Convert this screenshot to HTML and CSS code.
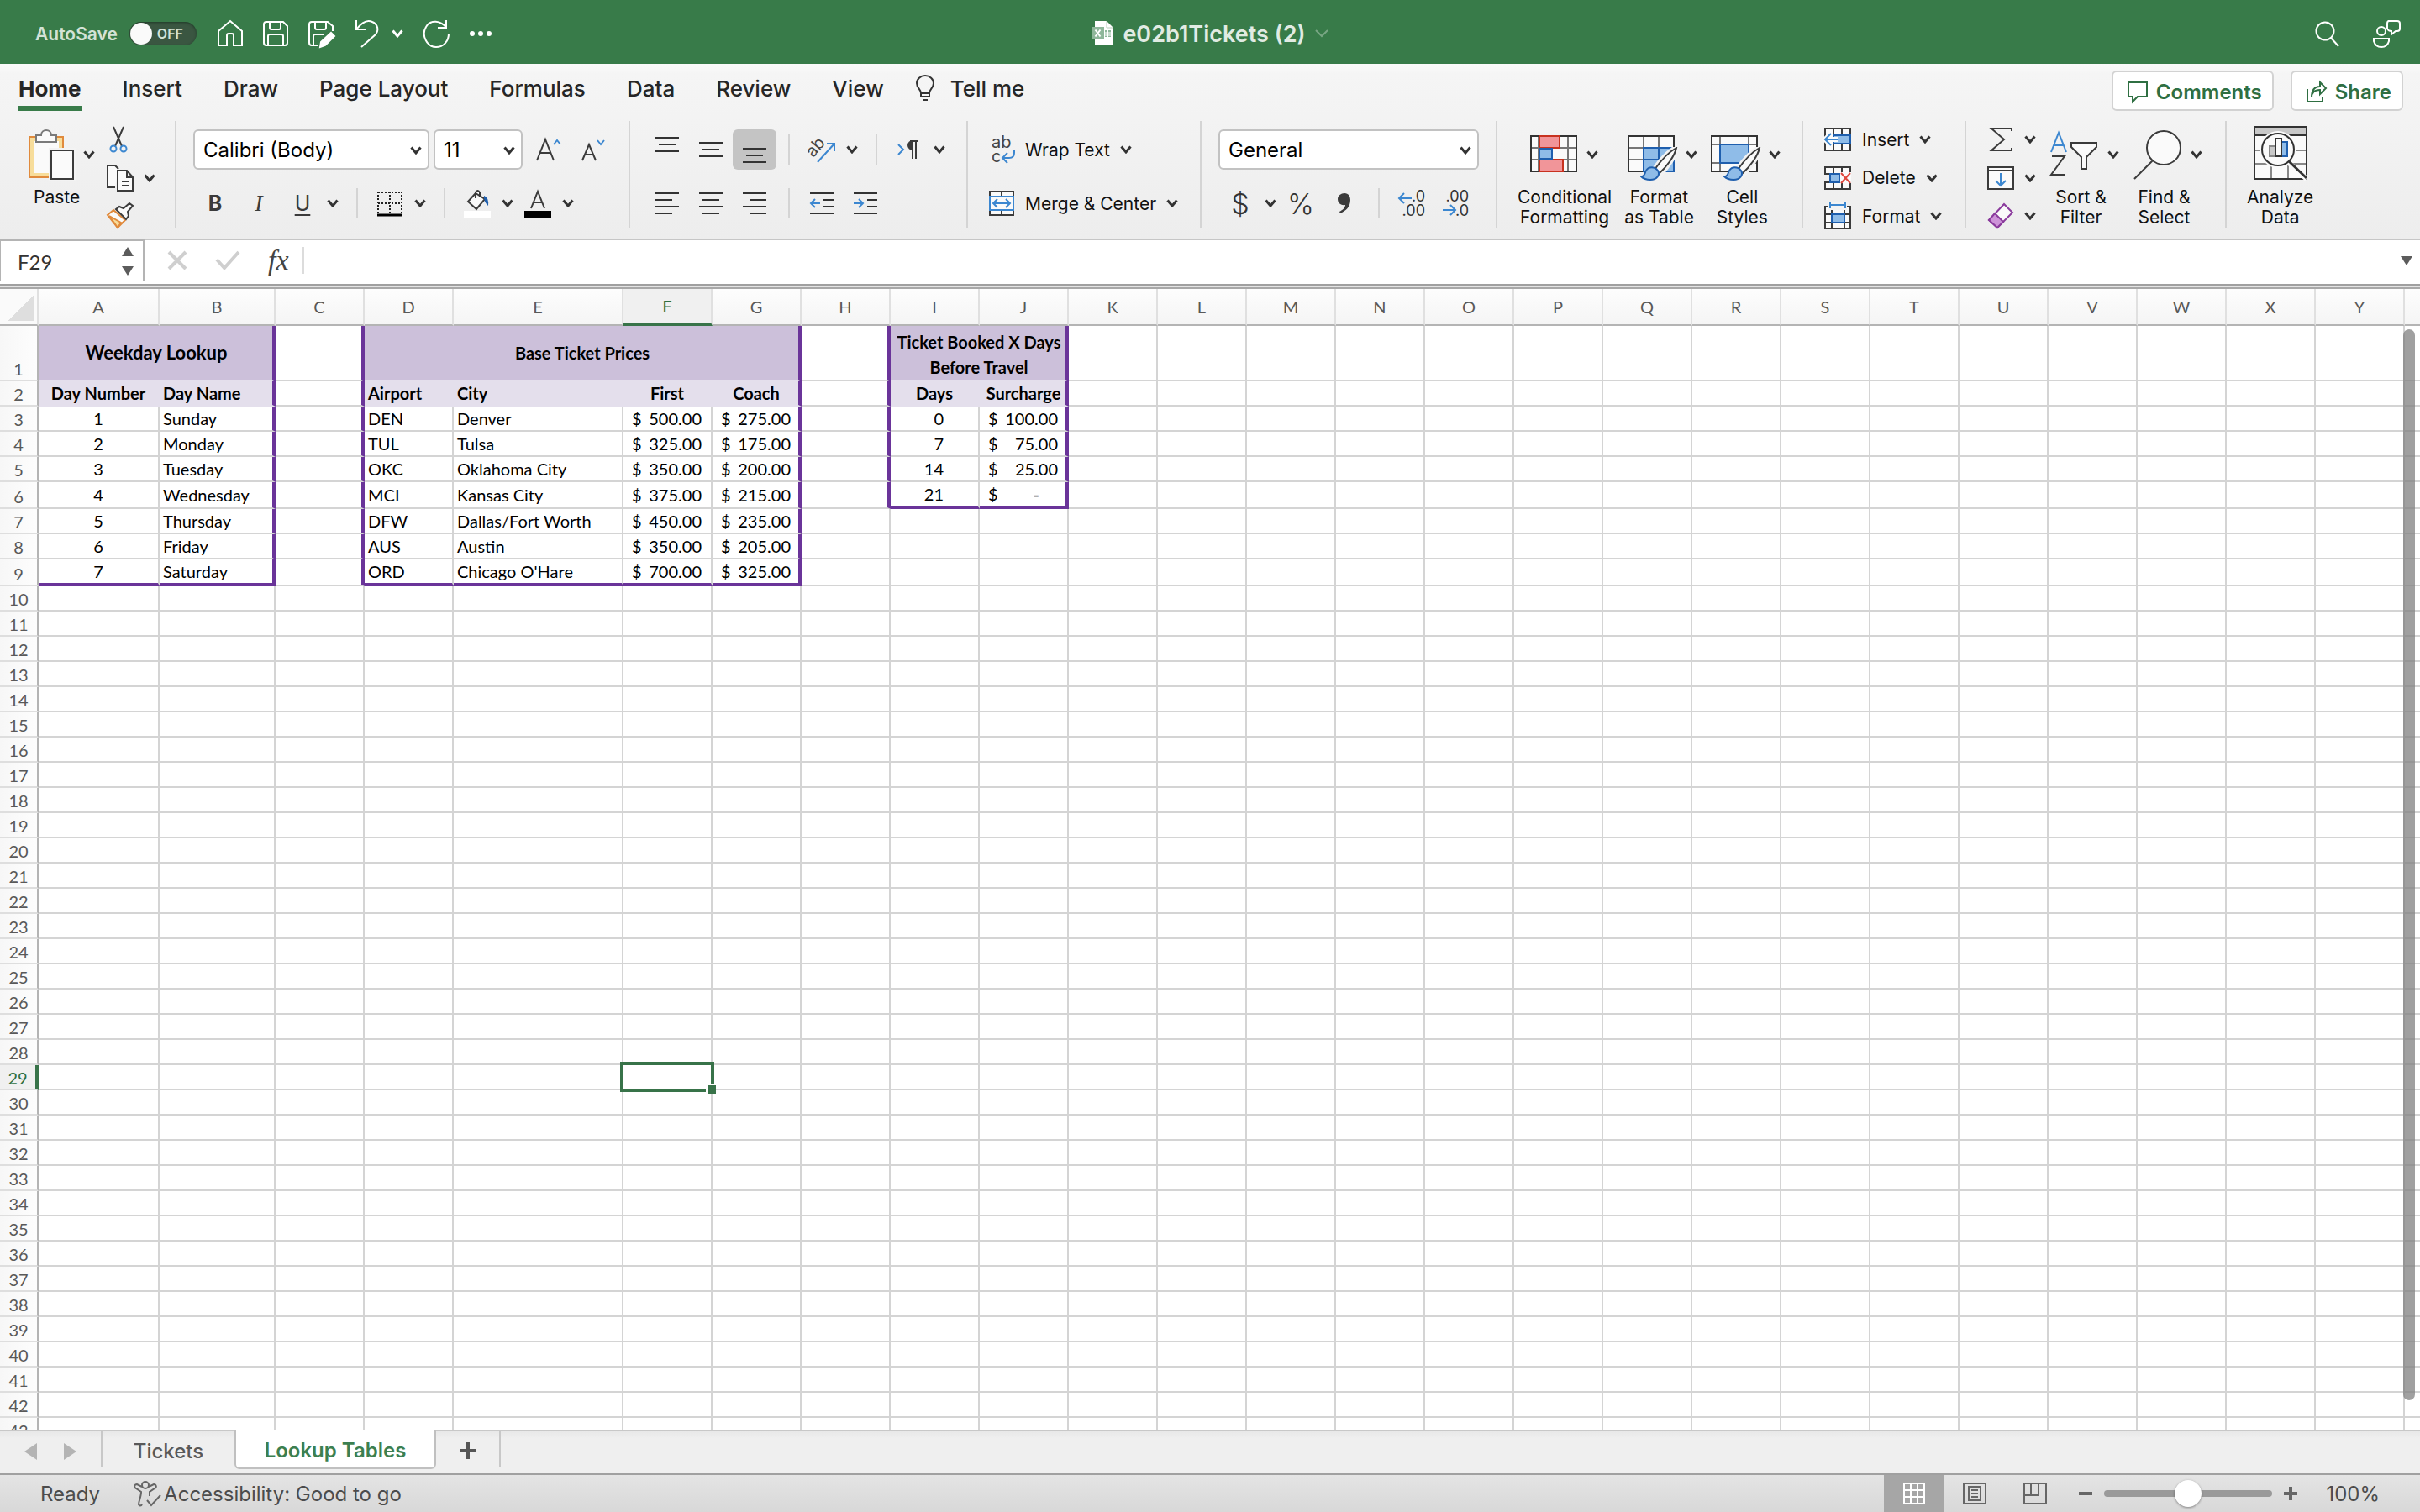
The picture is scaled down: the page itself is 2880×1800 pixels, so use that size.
FILE: index.html
```
<!DOCTYPE html>
<html lang="en">
<head>
  <meta charset="UTF-8">
  <title>e02b1Tickets (2)</title>
  <meta name="viewport" content="width=device-width, initial-scale=1.0">
  <link rel="stylesheet" href="styles.css">
</head>
<body>
  <svg class="defs" aria-hidden="true">
    <symbol id="chev" viewBox="0 0 14 10"><path d="M1.500 1.500 7 8 12.500 1.500" fill="none" stroke="currentColor" stroke-width="3"/></symbol>
    <symbol id="brush" viewBox="0 0 46 40">
      <path d="M43 1C34 6 24 17 17 27l6 6C31 24 41 11 43 1z" fill="#fafafa" stroke="#f3f3f3" stroke-width="7"/>
      <path d="M43 1C34 6 24 17 17 27l5 5C31 24 41 11 43 1z" fill="#fafafa" stroke="#3b3b3b" stroke-width="2"/>
      <path d="M1 35c5 0 4-4 6-7 3-5 10-5 14 0 3 5-1 11-9 11-5 0-9-2-11-4z" fill="#8fbce8" stroke="#1f5fae" stroke-width="2"/>
    </symbol>
  </svg>

  <header class="titlebar">
    <div class="title-left">
      <label class="autosave">AutoSave
        <span class="toggle"><input type="checkbox"><span>OFF</span></span>
      </label>
      <button aria-label="Home"><svg width="32" height="34" viewBox="0 0 32 34"><path d="M2 31V14L16 2l14 12v17H20V19q0-2-2-2h-4q-2 0-2 2v12z"/></svg></button>
      <button aria-label="Save"><svg width="32" height="34" viewBox="0 0 32 34"><path d="M5 3h20l5 5v20q0 3-3 3H5q-3 0-3-3V6q0-3 3-3zM9 3v7q0 2 2 2h9q2 0 2-2V3M7 31V20q0-2 2-2h14q2 0 2 2v11"/></svg></button>
      <button aria-label="Save as"><svg width="34" height="34" viewBox="0 0 34 34"><path d="M13 31H5q-3 0-3-3V6q0-3 3-3h19l6 5v6M9 3v7q0 2 2 2h9q2 0 2-2V3M7 31V20q0-2 2-2h11"/><path d="M28 16l4 4-11 11-6 2 1-6z" fill="#fff"/></svg></button>
      <button class="with-chev" aria-label="Undo"><svg width="30" height="36" viewBox="0 0 30 36"><path d="M2 2v11h12M2 13C9 4 15 1 21 4c7 3 8 10 4 15L8 34"/></svg><svg class="chev"><use href="#chev"/></svg></button>
      <button aria-label="Redo"><svg width="34" height="36" viewBox="0 0 34 36"><path d="M29 2v9H19M29 11C23 2 10 1 5 10-1 20 6 34 17 34c9 0 15-7 15-16"/></svg></button>
      <button aria-label="More"><svg width="28" height="34" viewBox="0 0 28 34"><g fill="#fff" stroke="none"><circle cx="4" cy="17" r="3"/><circle cx="14" cy="17" r="3"/><circle cx="24" cy="17" r="3"/></g></svg></button>
    </div>
    <div class="doc-title">
      <svg width="28" height="30" viewBox="0 0 28 30"><path d="M5 0h14l8 8v21H5z" fill="#fff" stroke="none"/><path d="M19 0v8h8" stroke="#b9cdbd" stroke-width="1"/><path d="M17 11h7v8h-7z" fill="#8fb79a" stroke="none"/><path d="M20.500 11v8M17 14h7M17 17h7" stroke="#fff" stroke-width="1"/><path d="M1 7h15v15H1z" fill="#8fb79a" stroke="none"/><path d="M5.500 10.500l6 8m0-8l-6 8" stroke="#fff" stroke-width="2"/></svg>
      <h1>e02b1Tickets (2)</h1>
      <svg class="chev chev-title" viewBox="0 0 18 12"><path d="M2 2l7 7 7-7"/></svg>
    </div>
    <div class="title-right">
      <button aria-label="Search"><svg width="32" height="34" viewBox="0 0 32 34"><circle cx="13" cy="14" r="10.500"/><path d="M20 22l9 10"/></svg></button>
      <button aria-label="Presence"><svg width="36" height="36" viewBox="0 0 36 36"><circle cx="12" cy="15" r="5"/><path d="M3 24h18v3q-2 7-9 7t-9-7zM20 3h11q3 0 3 3v6q0 3-3 3h-2l-5 4v-4q-4 0-5-3V6q0-3 2-3z"/></svg></button>
    </div>
  </header>

  <nav class="tabs">
    <a href="#" class="active">Home</a>
    <a href="#">Insert</a>
    <a href="#">Draw</a>
    <a href="#">Page Layout</a>
    <a href="#">Formulas</a>
    <a href="#">Data</a>
    <a href="#">Review</a>
    <a href="#">View</a>
    <a href="#" class="tell"><svg width="24" height="32" viewBox="0 0 24 32"><path d="M7 22c0-5-5-6-5-12a10 9 0 0 1 20 0c0 6-5 7-5 12zM7 22v4h10v-4M9 30h6" fill="none" stroke="#333" stroke-width="2"/></svg>Tell me</a>
    <div class="tab-actions">
      <button><svg width="26" height="26" viewBox="0 0 26 26"><path d="M2 2h22v17H13l-6 6v-6H2z" fill="none" stroke="#2f6f42" stroke-width="2"/></svg>Comments</button>
      <button><svg width="26" height="26" viewBox="0 0 26 26"><path d="M2 10v15h18v-5M7 20c0-7 4-9 10-9v5l7-7-7-7v5C10 7 7 12 7 20z" fill="none" stroke="#2f6f42" stroke-width="2"/></svg>Share</button>
    </div>
  </nav>

  <section class="ribbon">
    <div class="group g-clip">
      <button class="big">
        <span class="big-icon"><svg width="58" height="62" viewBox="0 0 58 62"><path d="M3 10h40v48H3z" fill="#f7dd9b" stroke="#e08a3c" stroke-width="2"/><path d="M8 15h30v38H8z" fill="#fafafa"/><path d="M11 8h6c0-8 12-8 12 0h6v8H11z" fill="#fafafa" stroke="#7a7a7a" stroke-width="2"/><path d="M26 23h32v39H26z" fill="#f3f3f3"/><path d="M29 26h26v34H29z" fill="#fafafa" stroke="#3b3b3b" stroke-width="2"/></svg><svg class="chev"><use href="#chev"/></svg></span>
        Paste
      </button>
      <div class="stack">
        <button aria-label="Cut"><svg width="32" height="34" viewBox="0 0 32 34" fill="none" stroke-width="2"><path d="M9 2l10 23M21 2L11 25" stroke="#3b3b3b"/><circle cx="9" cy="28" r="3.500" stroke="#3c87d0"/><circle cx="21" cy="28" r="3.500" stroke="#3c87d0"/></svg></button>
        <button aria-label="Copy"><svg width="34" height="34" viewBox="0 0 34 34" fill="#fafafa" stroke="#3b3b3b" stroke-width="2"><path d="M11 28H2V2h9l4 4"/><path d="M14 8h11l7 8v16H14zM25 8v8h7M19 21h8M19 26h8"/></svg><svg class="chev"><use href="#chev"/></svg></button>
        <button aria-label="Format painter"><svg width="34" height="32" viewBox="0 0 34 32" fill="#fafafa" stroke-width="2"><path d="M9 9l14 12-9 9L2 15z" stroke="#e08a3c"/><path d="M4 16l14 8-4 6z" fill="#f7dd9b" stroke="#e08a3c"/><path d="M12 8l4-3 5 2 7-6 4 3-6 7 1 5-3 4z" stroke="#3b3b3b"/></svg></button>
      </div>
    </div>

    <div class="group rows">
      <div class="row">
        <label class="pick pick-font"><select aria-label="Font"><option>Calibri (Body)</option></select><svg class="chev"><use href="#chev"/></svg></label>
        <label class="pick pick-size"><select aria-label="Font size"><option>11</option></select><svg class="chev"><use href="#chev"/></svg></label>
        <button class="ico" aria-label="Increase font size"><svg width="32" height="30" viewBox="0 0 32 30" fill="none" stroke="#3b3b3b" stroke-width="2"><path d="M2 28L12 3l10 25M6 19h12"/><path d="M22 9l4-5 4 5" stroke="#3c87d0"/></svg></button>
        <button class="ico" aria-label="Decrease font size"><svg width="32" height="30" viewBox="0 0 32 30" fill="none" stroke="#3b3b3b" stroke-width="2"><path d="M4 28l8-19 8 19M7 21h10"/><path d="M22 4l4 5 4-5" stroke="#3c87d0"/></svg></button>
      </div>
      <div class="row">
        <button class="ico txt bold">B</button>
        <button class="ico txt italic">I</button>
        <button class="ico txt under">U</button>
        <button class="drop" aria-label="Underline style"><svg class="chev"><use href="#chev"/></svg></button>
        <i class="sep"></i>
        <button class="ico" aria-label="Borders"><svg width="32" height="32" viewBox="0 0 32 32" fill="none" stroke="#222" stroke-width="2"><path d="M2 3h28M2 16h28M2 2v26M16 2v26M30 2v26" stroke-dasharray="2 2"/><path d="M1 30h30" stroke="#000" stroke-width="3"/></svg></button>
        <button class="drop" aria-label="Border style"><svg class="chev"><use href="#chev"/></svg></button>
        <i class="sep"></i>
        <button class="ico" aria-label="Fill color"><svg width="32" height="34" viewBox="0 0 32 34" fill="#fafafa" stroke="#3b3b3b" stroke-width="2"><path d="M14 5L5 15l10 9 10-12zM14 11V4q2-4 5 0v5"/><path d="M24 8q6 2 5 12-4-3-5-9z" fill="#1f5fae" stroke="none"/><path d="M0 26h32v8H0z" fill="#fff" stroke="none"/></svg></button>
        <button class="drop" aria-label="Fill colors"><svg class="chev"><use href="#chev"/></svg></button>
        <button class="ico" aria-label="Font color"><svg width="32" height="34" viewBox="0 0 32 34" fill="none" stroke="#3b3b3b" stroke-width="2"><path d="M8 23l8-20 8 20M11 16h10"/><path d="M0 26h32v8H0z" fill="#000" stroke="none"/></svg></button>
        <button class="drop" aria-label="Font colors"><svg class="chev"><use href="#chev"/></svg></button>
      </div>
    </div>

    <div class="group rows align">
      <div class="row">
        <button class="ico" aria-label="Top align"><svg class="lines" viewBox="0 0 28 32"><path d="M0 2h28M4 10h20M0 18h28"/></svg></button>
        <button class="ico" aria-label="Middle align"><svg class="lines" viewBox="0 0 28 32"><path d="M0 8h28M4 16h20M0 24h28"/></svg></button>
        <button class="ico pressed" aria-label="Bottom align"><svg class="lines" viewBox="0 0 28 32"><path d="M0 15h28M4 23h20M0 31h28"/></svg></button>
        <i class="sep tight"></i>
        <button class="ico" aria-label="Orientation"><svg width="34" height="34" viewBox="0 0 34 34"><text x="2" y="23" transform="rotate(-50 9 20)" class="ic-text">ab</text><path d="M12 32L32 10M23 10h9v9" fill="none" stroke="#3c87d0" stroke-width="2"/></svg></button>
        <button class="drop" aria-label="Orientation options"><svg class="chev"><use href="#chev"/></svg></button>
        <i class="sep"></i>
        <button class="ico" aria-label="Text direction"><svg width="28" height="24" viewBox="0 0 28 24" fill="none" stroke-width="2"><path d="M1 6l6 6-6 6" stroke="#3c87d0"/><path d="M18 3v20M22 3v20M15 2h10" stroke="#3b3b3b"/><path d="M18 2a5 5 0 0 0 0 10z" fill="#3b3b3b" stroke="#3b3b3b"/></svg></button>
        <button class="drop" aria-label="Text direction options"><svg class="chev"><use href="#chev"/></svg></button>
      </div>
      <div class="row">
        <button class="ico" aria-label="Align left"><svg class="lines" viewBox="0 0 28 32"><path d="M0 4h28M0 12h20M0 20h28M0 28h20"/></svg></button>
        <button class="ico" aria-label="Center"><svg class="lines" viewBox="0 0 28 32"><path d="M0 4h28M4 12h20M0 20h28M4 28h20"/></svg></button>
        <button class="ico" aria-label="Align right"><svg class="lines" viewBox="0 0 28 32"><path d="M0 4h28M8 12h20M0 20h28M8 28h20"/></svg></button>
        <i class="sep tight"></i>
        <button class="ico" aria-label="Decrease indent"><svg class="lines" viewBox="0 0 28 32"><path d="M0 4h28M16 12h12M16 20h12M0 28h28"/><path class="blue" d="M12 16H1M6 11l-5 5 5 5"/></svg></button>
        <button class="ico" aria-label="Increase indent"><svg class="lines" viewBox="0 0 28 32"><path d="M0 4h28M16 12h12M16 20h12M0 28h28"/><path class="blue" d="M0 16h11M6 11l5 5-5 5"/></svg></button>
      </div>
    </div>

    <div class="group rows">
      <div class="row">
        <button class="labelled"><svg width="32" height="34" viewBox="0 0 32 34"><text x="4" y="15" class="ic-text">ab</text><text x="4" y="32" class="ic-text">c</text><path d="M31 17v4q0 6-6 6h-7M23 21l-6 6 6 6" fill="none" stroke="#3c87d0" stroke-width="2"/></svg>Wrap Text<svg class="chev"><use href="#chev"/></svg></button>
      </div>
      <div class="row">
        <button class="labelled"><svg width="32" height="32" viewBox="0 0 32 32" fill="#fafafa" stroke="#3b3b3b" stroke-width="2"><path d="M2 2h28v28H2zM16 2v28"/><path d="M2 8h28v16H2zM6 16h20M11 11l-5 5 5 5M21 11l5 5-5 5" stroke="#3c87d0"/></svg>Merge &amp; Center<svg class="chev"><use href="#chev"/></svg></button>
      </div>
    </div>

    <div class="group rows">
      <div class="row">
        <label class="pick pick-number"><select aria-label="Number format"><option>General</option></select><svg class="chev"><use href="#chev"/></svg></label>
      </div>
      <div class="row money-row">
        <button class="ico sign">$</button>
        <button class="drop" aria-label="Currency"><svg class="chev"><use href="#chev"/></svg></button>
        <button class="ico sign">%</button>
        <button class="ico" aria-label="Comma style"><svg width="18" height="26" viewBox="0 0 18 26"><path d="M9 1c5 0 7 4 7 8 0 8-5 13-12 16l-1-2c4-2 7-5 7-8-6 1-9-3-9-7s4-7 8-7z" fill="#3b3b3b"/></svg></button>
        <i class="sep tight"></i>
        <button class="ico" aria-label="Increase decimal"><svg width="34" height="34" viewBox="0 0 34 34"><text x="33" y="15" class="ic-num">.0</text><text x="33" y="32" class="ic-num">.00</text><path d="M17 11H2M8 5l-6 6 6 6" fill="none" stroke="#3c87d0" stroke-width="2"/></svg></button>
        <button class="ico" aria-label="Decrease decimal"><svg width="34" height="34" viewBox="0 0 34 34"><text x="33" y="15" class="ic-num">.00</text><text x="33" y="32" class="ic-num">.0</text><path d="M2 25h15M11 19l6 6-6 6" fill="none" stroke="#3c87d0" stroke-width="2"/></svg></button>
      </div>
    </div>

    <div class="group g-styles">
      <button class="big">
        <span class="big-icon"><svg width="60" height="62" viewBox="0 0 60 62" fill="none" stroke="#777" stroke-width="2"><path d="M3 9h54v42H3z" fill="#fafafa"/><path d="M12 9v42M47 9v42M3 23h54M3 37h54"/><path d="M3 9h54v42H3z" stroke="#333"/><path d="M13 9h24v14H13zM13 37h28v14H13z" fill="#f19599" stroke="#c8321f"/><path d="M13 24h15v12H13z" fill="#8fbce8" stroke="#1f5fae"/></svg><svg class="chev"><use href="#chev"/></svg></span>
        Conditional<br>Formatting
      </button>
      <button class="big">
        <span class="big-icon"><svg width="60" height="62" viewBox="0 0 60 62" fill="none" stroke="#777" stroke-width="2"><path d="M1 9h54v42H1z" fill="#fafafa"/><path d="M19 9v42M37 9v42M1 23h54M1 37h54"/><path d="M1 9h54v42H1z" stroke="#333"/><path d="M19 23h36v28H19z" fill="#8fbce8" stroke="#1f5fae"/><path d="M37 23v28M19 37h36" stroke="#1f5fae"/><use href="#brush" x="15" y="22" width="46" height="40" stroke="none"/></svg><svg class="chev"><use href="#chev"/></svg></span>
        Format<br>as Table
      </button>
      <button class="big">
        <span class="big-icon"><svg width="60" height="62" viewBox="0 0 60 62" fill="none" stroke="#777" stroke-width="2"><path d="M1 9h54v42H1z" fill="#fafafa"/><path d="M11 9v42M45 9v42M1 19h54M1 41h54"/><path d="M1 9h54v42H1z" stroke="#333"/><path d="M11 19h34v22H11z" fill="#8fbce8" stroke="#1f5fae"/><use href="#brush" x="15" y="22" width="46" height="40" stroke="none"/></svg><svg class="chev"><use href="#chev"/></svg></span>
        Cell<br>Styles
      </button>
    </div>

    <div class="group g-cells">
      <button class="labelled"><svg width="34" height="30" viewBox="0 0 34 30" fill="#fafafa" stroke="#3b3b3b" stroke-width="2"><path d="M2 2h30v26H2zM12 2v26M22 2v26"/><path d="M12 10h20v10H12z" fill="#8fbce8" stroke="#1f5fae"/><path d="M17 15H3M9 8l-7 7 7 7" fill="none" stroke="#fafafa" stroke-width="6"/><path d="M17 15H3M9 8l-7 7 7 7" fill="none" stroke="#3c87d0"/></svg>Insert<svg class="chev"><use href="#chev"/></svg></button>
      <button class="labelled"><svg width="34" height="30" viewBox="0 0 34 30" fill="#fafafa" stroke="#3b3b3b" stroke-width="2"><path d="M2 10V2h30v26H2v-8h7V10zM12 2v26M22 2v26"/><path d="M8 10h12v10H8z" fill="#8fbce8" stroke="#1f5fae"/><path d="M20 8h13v13H20z" stroke="none"/><path d="M21 9l11 12M32 9L21 21" stroke="#e0483e"/></svg>Delete<svg class="chev"><use href="#chev"/></svg></button>
      <button class="labelled"><svg width="34" height="34" viewBox="0 0 34 34" fill="#fafafa" stroke="#3b3b3b" stroke-width="2"><path d="M2 6h30v26H2zM10 6v26M25 6v26M2 15h30M2 25h30"/><path d="M5 0h23v10H5z" fill="#f3f3f3" stroke="none"/><path d="M10 15h15v10H10z" fill="#8fbce8" stroke="#1f5fae"/><path d="M8 4h18M8 0v8M26 0v8" stroke="#3c87d0"/></svg>Format<svg class="chev"><use href="#chev"/></svg></button>
    </div>

    <div class="group g-edit">
      <div class="stack">
        <button aria-label="AutoSum"><svg width="34" height="30" viewBox="0 0 34 30" fill="none" stroke="#3b3b3b" stroke-width="2"><path d="M30 5V2H6l15 13L6 28h24v-3"/></svg><svg class="chev"><use href="#chev"/></svg></button>
        <button aria-label="Fill"><svg width="34" height="30" viewBox="0 0 34 30" fill="#fafafa" stroke="#3b3b3b" stroke-width="2"><path d="M2 2h30v26H2zM2 6h30"/><path d="M17 9v15M11 18l6 6 6-6" stroke="#3c87d0" fill="none"/></svg><svg class="chev"><use href="#chev"/></svg></button>
        <button aria-label="Clear"><svg width="34" height="32" viewBox="0 0 34 32" fill="#fafafa" stroke="#8a3a9c" stroke-width="2"><path d="M21 2l10 10-18 18L3 21z"/><path d="M10 13l10 10-7 7L3 21z" fill="#cd93d8"/></svg><svg class="chev"><use href="#chev"/></svg></button>
      </div>
      <button class="big">
        <span class="big-icon"><svg width="60" height="62" viewBox="0 0 60 62" fill="none" stroke="#3b3b3b" stroke-width="2"><path d="M2 28l9-23 9 23M5 20h12" stroke="#3c87d0"/><path d="M3 33h15L2 55h17"/><path d="M26 17h30v5L44 34v14h-6V34L26 22z" fill="#fafafa"/></svg><svg class="chev"><use href="#chev"/></svg></span>
        Sort &amp;<br>Filter
      </button>
      <button class="big find">
        <span class="big-icon"><svg width="60" height="62" viewBox="0 0 60 62" fill="none" stroke="#3b3b3b" stroke-width="2"><circle cx="37" cy="23" r="20" fill="#fafafa"/><path d="M24 38L2 60"/></svg><svg class="chev"><use href="#chev"/></svg></span>
        Find &amp;<br>Select
      </button>
    </div>

    <div class="group g-data">
      <button class="big">
        <span class="big-icon"><svg width="66" height="66" viewBox="0 0 66 66" fill="none" stroke="#888" stroke-width="2"><path d="M2 2h62v62H2z" fill="#fafafa"/><path d="M2 2h62v10H2z" fill="#c8c8c8"/><path d="M2 30h62M2 46h62M22 46v18M42 46v18"/><path d="M2 2h62v62H2zM2 12h62" stroke="#333"/><circle cx="30" cy="29" r="22" fill="#fafafa" stroke="none"/><path d="M42 44l22 20" stroke="#fafafa" stroke-width="6"/><circle cx="30" cy="29" r="19" stroke="#333"/><path d="M43 43l21 20" stroke="#333" stroke-width="3"/><path d="M20 25h7v12h-7z" fill="#c8c8c8"/><path d="M34 20h7v17h-7z" fill="#8fbce8" stroke="#1f5fae"/><path d="M27 16h7v21h-7z" fill="#fafafa" stroke="#333"/></svg></span>
        Analyze<br>Data
      </button>
    </div>
  </section>

  <div class="formula-bar">
    <div class="name-box">
      <input type="text" value="F29" aria-label="Name box">
      <svg width="16" height="34" viewBox="0 0 16 34"><path d="M8 0l7 11H1zM8 34l7-11H1z" fill="#5c5c5c"/></svg>
    </div>
    <button aria-label="Cancel"><svg width="24" height="24" viewBox="0 0 24 24"><path d="M2 2l20 20M22 2L2 22" stroke="#cfcfcf" stroke-width="4"/></svg></button>
    <button aria-label="Enter"><svg width="30" height="24" viewBox="0 0 30 24"><path d="M2 11l9 10L28 2" fill="none" stroke="#cfcfcf" stroke-width="4"/></svg></button>
    <button class="fx">fx</button>
    <input type="text" class="formula" aria-label="Formula">
    <svg width="16" height="12" viewBox="0 0 16 12"><path d="M1 1h14L8 12z" fill="#5c5c5c"/></svg>
  </div>

  <main class="sheet">
    <table id="grid"></table>
    <div class="scrollbar"></div>
  </main>

  <footer>
    <div class="sheet-tabs">
      <div class="tab-nav">
        <button aria-label="Previous sheet"><svg width="16" height="20" viewBox="0 0 16 20"><path d="M15 0v20L0 10z" fill="#b4b4b4"/></svg></button>
        <button aria-label="Next sheet"><svg width="16" height="20" viewBox="0 0 16 20"><path d="M1 0v20l15-10z" fill="#b4b4b4"/></svg></button>
      </div>
      <button class="sheet-tab">Tickets</button>
      <button class="sheet-tab current">Lookup Tables</button>
      <button class="add" aria-label="Add sheet"><svg width="20" height="20" viewBox="0 0 20 20"><path d="M10 0v20M0 10h20" stroke="#555" stroke-width="4"/></svg></button>
    </div>
    <div class="status">
      <span class="ready">Ready</span>
      <span class="access"><svg width="34" height="32" viewBox="0 0 34 32" fill="none" stroke="#666" stroke-width="2"><circle cx="15" cy="6" r="4"/><path d="M11 8L5 5c-3 0-4 4-1 5l6 4c0 6-3 11-3 15 1 2 3 2 4 0M19 8l6-3c3 0 4 4 1 5l-6 4v5M17 24l5 6L33 18"/></svg>Accessibility: Good to go</span>
      <button class="view on" aria-label="Normal view"><svg width="26" height="26" viewBox="0 0 26 26" fill="none" stroke="#fff" stroke-width="2"><path d="M1 1h24v24H1zM9 1v24M17 1v24M1 9h24M1 17h24"/></svg></button>
      <button class="view" aria-label="Page layout view"><svg width="28" height="26" viewBox="0 0 28 26" fill="none" stroke="#666" stroke-width="2"><path d="M1 1h26v24H1zM7 5h14v16H7zM10 9h8M10 13h8M10 17h8"/></svg></button>
      <button class="view" aria-label="Page break view"><svg width="28" height="26" viewBox="0 0 28 26" fill="none" stroke="#666" stroke-width="2"><path d="M1 1h26v24H1zM1 15h17V1M9 1v14"/></svg></button>
      <button class="step" aria-label="Zoom out"><svg width="16" height="16" viewBox="0 0 16 16"><path d="M0 8h16" stroke="#666" stroke-width="4"/></svg></button>
      <input type="range" min="0" max="100" value="50" aria-label="Zoom">
      <button class="step" aria-label="Zoom in"><svg width="16" height="16" viewBox="0 0 16 16"><path d="M0 8h16M8 0v16" stroke="#666" stroke-width="4"/></svg></button>
      <span class="percent">100%</span>
    </div>
  </footer>

  <script>
    const letters = 'ABCDEFGHIJKLMNOPQRSTUVWXYZ'.split('');
    const days = ['Sunday', 'Monday', 'Tuesday', 'Wednesday', 'Thursday', 'Friday', 'Saturday'];
    const airports = [
      ['DEN', 'Denver', '500.00', '275.00'],
      ['TUL', 'Tulsa', '325.00', '175.00'],
      ['OKC', 'Oklahoma City', '350.00', '200.00'],
      ['MCI', 'Kansas City', '375.00', '215.00'],
      ['DFW', 'Dallas/Fort Worth', '450.00', '235.00'],
      ['AUS', 'Austin', '350.00', '205.00'],
      ['ORD', "Chicago O'Hare", '700.00', '325.00']
    ];
    const surcharges = [['0', '100.00'], ['7', '75.00'], ['14', '25.00'], ['21', '-']];

    const money = (v) => `<div class="money"><span>$</span><span${v === '-' ? ' class="dash"' : ''}>${v}</span></div>`;
    const cell = (text, cls) => `<td${cls ? ` class="${cls}"` : ''}>${text || ''}</td>`;

    // cells K..Z are always empty
    const rest = letters.slice(10).map(() => cell()).join('');

    let html = '<colgroup><col class="c-num">' + letters.map(l => `<col class="c-${l.toLowerCase()}">`).join('') + '</colgroup>';
    html += '<thead><tr><th class="corner"></th>' + letters.map(l => `<th${l === 'F' ? ' class="sel"' : ''}>${l}</th>`).join('') + '</tr></thead><tbody>';

    html += `<tr class="r-title"><th>1</th><td colspan="2" class="head large pr">Weekday Lookup</td><td class="pr"></td>
      <td colspan="4" class="head pr">Base Ticket Prices</td><td class="pr"></td>
      <td colspan="2" class="head low pr">Ticket Booked X Days Before Travel</td>${rest}</tr>`;

    html += '<tr><th>2</th>' + cell('Day Number', 'sub mid') + cell('Day Name', 'sub pr') + cell('', 'pr')
      + cell('Airport', 'sub') + cell('City', 'sub') + cell('First', 'sub mid') + cell('Coach', 'sub mid pr')
      + cell('', 'pr') + cell('Days', 'sub mid') + cell('Surcharge', 'sub mid pr') + rest + '</tr>';

    for (let r = 3; r <= 43; r++) {
      const i = r - 3;
      const tall = r === 6 || r === 9;
      html += `<tr${tall ? ' class="tall"' : ''}><th${r === 29 ? ' class="sel"' : ''}>${r}</th>`;
      if (i < 7) {
        const end = i === 6 ? ' pb' : '';
        const [code, city, first, coach] = airports[i];
        html += cell(i + 1, 'mid' + end) + cell(days[i], 'pr' + end) + cell('', 'pr')
          + cell(code, end.trim()) + cell(city, end.trim()) + cell(money(first), end.trim()) + cell(money(coach), 'pr' + end);
      } else {
        html += cell() + cell() + cell() + cell() + cell();
        html += r === 29 ? '<td class="active-cell"><span class="handle"></span></td>' : cell();
        html += cell();
      }
      if (i < 4) {
        const end = i === 3 ? ' pb' : '';
        html += cell('', 'pr') + cell(surcharges[i][0], 'days' + end) + cell(money(surcharges[i][1]), 'pr' + end);
      } else {
        html += cell() + cell() + cell();
      }
      html += rest + '</tr>';
    }
    document.getElementById('grid').innerHTML = html + '</tbody>';
  </script>
</body>
</html>
```
FILE: styles.css
```
* {
  box-sizing: border-box;
}
body {
  margin: 0;
  height: 100vh;
  display: flex;
  flex-direction: column;
  overflow: hidden;
  font-family: Inter, "Liberation Sans", sans-serif;
  font-size: 21px;
  color: #111;
  background: #fff;
}
button, input, select {
  font: inherit;
  color: inherit;
  background: none;
  border: none;
  padding: 0;
  margin: 0;
  outline: none;
}
button {
  display: inline-flex;
  align-items: center;
  justify-content: center;
}
svg {
  display: block;
  flex: none;
  overflow: visible;
}
.defs {
  position: absolute;
  width: 0;
  height: 0;
}
.chev {
  width: 14px;
  height: 10px;
  color: #333;
}

/* title bar */
.titlebar {
  height: 76px;
  flex: none;
  display: grid;
  grid-template-columns: 1fr auto 1fr;
  align-items: center;
  padding: 4px 22px 0;
  background: #387b49;
  color: #fff;
}
.titlebar svg {
  fill: none;
  stroke: #fff;
  stroke-width: 2;
}
.titlebar .chev {
  color: #fff;
}
.title-left, .title-right, .doc-title {
  display: flex;
  align-items: center;
}
.title-left {
  gap: 22px;
  padding-left: 20px;
}
.title-left .with-chev {
  gap: 14px;
}
.title-right {
  justify-content: flex-end;
  gap: 36px;
}
.autosave {
  display: flex;
  align-items: center;
  gap: 14px;
  margin-right: 2px;
  font-weight: 600;
  color: #d3e2d6;
}
.toggle {
  position: relative;
  display: flex;
  align-items: center;
  width: 80px;
  height: 28px;
  border-radius: 14px;
  background: #3a5641;
  box-shadow: inset 0 1px 3px #1f3a27;
}
.toggle input {
  appearance: none;
  width: 26px;
  height: 26px;
  margin-left: 1px;
  border-radius: 50%;
  background: #fafafa;
}
.toggle span {
  margin-left: 6px;
  font-size: 16px;
}
.doc-title {
  gap: 10px;
}
.doc-title h1 {
  margin: 0;
  font-size: 27px;
  font-weight: 600;
  color: #e1ebe3;
}
.titlebar .chev-title {
  width: 18px;
  height: 12px;
  stroke: #79a684;
}

/* ribbon tabs */
.tabs {
  height: 64px;
  flex: none;
  display: flex;
  align-items: flex-start;
  gap: 49px;
  padding: 8px 20px 0 22px;
  background: linear-gradient(#fafafa, #f5f5f5 12px, #f3f3f3);
  font-size: 26px;
  font-weight: 500;
}
.tabs a {
  display: flex;
  align-items: center;
  height: 48px;
  color: #262626;
  text-decoration: none;
  border-bottom: 6px solid transparent;
}
.tabs .active {
  font-weight: 700;
  border-image: linear-gradient(#387b49, #387b49) 1;
}
.tabs .tell {
  gap: 18px;
  margin-left: -12px;
}
.tab-actions {
  display: flex;
  gap: 20px;
  margin-left: auto;
}
.tab-actions button {
  height: 48px;
  padding: 2px 12px 0 16px;
  gap: 9px;
  background: #fff;
  border: 2px solid #d2d2d2;
  border-radius: 6px;
  color: #2f6f42;
  font-size: 24px;
  font-weight: 600;
}

/* ribbon */
.ribbon {
  height: 144px;
  flex: none;
  display: grid;
  grid-template-columns: 210px 540px 402px 278px 352px 364px 194px 310px 1fr;
  padding: 4px 0 16px;
  background: linear-gradient(#f3f3f3, #ededed);
}
.group {
  display: flex;
  padding-left: 20px;
  border-right: 2px solid #d4d4d4;
}
.group:last-child {
  border-right: none;
}
.rows {
  flex-direction: column;
  justify-content: space-between;
  padding-top: 10px;
  padding-bottom: 5px;
}
.row {
  display: flex;
  align-items: center;
  height: 48px;
}
.align {
  padding-left: 18px;
}
.ico {
  width: 52px;
  height: 48px;
}
.drop {
  width: 20px;
  height: 48px;
}
.pressed {
  background: #c4c4c4;
  border-radius: 6px;
}
.sep {
  width: 2px;
  height: 36px;
  margin: 0 12px 0 18px;
  background: #d4d4d4;
}
.sep.tight {
  margin-left: 14px;
}
.txt {
  font-size: 25px;
  color: #3b3b3b;
}
.bold {
  font-weight: 700;
}
.italic {
  font-family: "Liberation Serif", serif;
  font-size: 28px;
  font-style: italic;
}
.under {
  text-decoration: underline;
  text-underline-offset: 4px;
}
.sign {
  font-size: 34px;
  font-weight: 300;
  color: #333;
}
.lines {
  width: 28px;
  height: 32px;
  overflow: visible;
  fill: none;
  stroke: #333;
  stroke-width: 2;
}
.lines .blue {
  stroke: #3c87d0;
}
.ic-text {
  font-size: 20px;
  fill: #444;
}
.ic-num {
  font-size: 18px;
  fill: #333;
  text-anchor: end;
}
.pick {
  position: relative;
  height: 48px;
  margin-right: 5px;
  border: 2px solid #c2c2c2;
  border-radius: 6px;
  background: #fff;
}
.pick select {
  appearance: none;
  width: 100%;
  height: 100%;
  padding-left: 10px;
  font-size: 24px;
  color: #000;
}
.pick .chev {
  position: absolute;
  right: 7px;
  top: 18px;
  pointer-events: none;
}
.pick-font {
  width: 281px;
}
.pick-size {
  width: 106px;
}
.pick-number {
  width: 310px;
}
.labelled {
  gap: 12px;
  margin-left: 4px;
}
.big {
  flex-direction: column;
  justify-content: flex-start;
  line-height: 24px;
  padding-top: 7px;
}
.big-icon {
  display: flex;
  align-items: center;
  gap: 9px;
  height: 66px;
  margin-bottom: 6px;
}
.stack, .g-cells {
  display: flex;
  flex-direction: column;
  justify-content: space-between;
  padding-top: 8px;
}
.stack button, .g-cells .labelled {
  height: 28px;
}
.stack button {
  justify-content: flex-start;
  gap: 11px;
}
.g-clip {
  padding-left: 32px;
}
.g-clip .stack {
  margin-left: 13px;
}
.g-clip .big {
  align-items: flex-start;
  text-indent: 8px;
}
.g-styles {
  padding-left: 24px;
}
.g-styles .big:nth-child(1) {
  margin-right: 15px;
}
.g-styles .big:nth-child(2) {
  margin-right: 20px;
}
.g-styles .big-icon, .g-edit .big-icon {
  margin-right: -8px;
}
.g-styles .big:nth-child(1) .big-icon {
  margin-right: 4px;
}
.g-cells {
  align-items: flex-start;
}
.g-edit {
  padding-left: 24px;
}
.g-edit .big {
  margin-left: 16px;
}
.g-edit .find {
  margin-left: 24px;
}
.g-data {
  padding-left: 24px;
}
.g-data .big {
  padding-top: 5px;
}
.g-data .big-icon {
  margin-bottom: 8px;
}

/* formula bar */
.formula-bar {
  height: 60px;
  flex: none;
  display: flex;
  align-items: center;
  padding: 0 8px 8px 0;
  border-top: 2px solid #c6c6c6;
  border-bottom: 2px solid #a8a8a8;
  background: linear-gradient(#fff 52px, #a0a0a0 52px, #a0a0a0 54px, #e4e4e4 54px);
}
.formula-bar button {
  margin-right: 33px;
}
.name-box {
  display: flex;
  align-items: center;
  width: 172px;
  height: 50px;
  margin-right: 27px;
  padding: 0 10px 0 20px;
  border: 2px solid #b4b4b4;
  border-left-width: 1px;
  border-bottom: none;
}
.name-box input {
  width: 100%;
  font-family: Lato, sans-serif;
  font-size: 24px;
  color: #333;
}
.formula-bar .fx {
  margin-right: 16px;
  font-family: "Liberation Serif", serif;
  font-size: 34px;
  font-style: italic;
  color: #444;
}
.formula {
  flex: 1;
  height: 32px;
  border-left: 2px solid #dcdcdc;
}

/* grid */
.sheet {
  position: relative;
  flex: 1;
  min-height: 0;
  overflow: hidden;
}
table {
  table-layout: fixed;
  width: 2968px;
  border-collapse: separate;
  border-spacing: 0;
  font-family: Lato, sans-serif;
  font-size: 20px;
  line-height: 26px;
  color: #000;
}
col {
  width: 106px;
}
.c-num {
  width: 46px;
}
.c-a {
  width: 144px;
}
.c-b {
  width: 138px;
}
.c-e {
  width: 202px;
}
td, th {
  height: 30px;
  padding: 0 4px;
  white-space: nowrap;
  border-right: 2px solid #d4d4d4;
  border-bottom: 2px solid #d4d4d4;
}
th {
  font-weight: 400;
  color: #595959;
}
thead th {
  height: 44px;
  background: linear-gradient(#fdfdfd, #f5f5f5);
  border-right-color: #e0e0e0;
  border-bottom-color: #b4b4b4;
}
thead .corner {
  border-right-color: #e0e0e0;
  background: linear-gradient(135deg, transparent 50%, #dedede 50%) 10px 8px / 30px 30px no-repeat, #fafafa;
}
thead .sel {
  background: #f0f0f0;
  color: #2f6f42;
  border-bottom: 4px solid #387349;
}
tbody th {
  padding: 0;
  vertical-align: bottom;
  background: linear-gradient(90deg, #f7f7f7, #fdfdfd);
  border-right-color: #b4b4b4;
  border-bottom-color: #dedede;
}
tbody .sel {
  background: #f0f0f0;
  color: #2f6f42;
  border-right: 4px solid #387349;
}
.r-title td {
  height: 66px;
}
.tall td {
  height: 32px;
}
.head {
  font-weight: 700;
  line-height: 30px;
  text-align: center;
  white-space: normal;
  background: #ccc0da;
  border-bottom-color: #e4dfec;
}
.large {
  font-size: 22px;
}
.low {
  vertical-align: bottom;
}
.sub {
  font-weight: 700;
  background: #e4dfec;
  border-color: #e4dfec;
}
.mid {
  text-align: center;
}
.pr {
  border-right: 4px solid #6a3499;
}
.pb {
  border-bottom: 4px solid #6a3499;
}
td.pr {
  padding-right: 2px;
}
.days {
  padding-right: 41px;
  text-align: right;
}
.money {
  display: flex;
  justify-content: space-between;
  padding: 0 7px 0 6px;
}
.dash {
  padding-right: 22px;
}
.active-cell {
  position: relative;
}
.active-cell::after {
  content: "";
  position: absolute;
  inset: -4px;
  border: 4px solid #387349;
}
.handle {
  position: absolute;
  z-index: 1;
  right: -6px;
  bottom: -6px;
  width: 10px;
  height: 10px;
  background: #387349;
  box-shadow: -2px -2px 0 #fff;
}
.scrollbar {
  position: absolute;
  top: 48px;
  right: 6px;
  bottom: 35px;
  width: 14px;
  border-radius: 7px;
  background: rgba(128, 128, 128, 0.75);
}

/* sheet tabs */
.sheet-tabs {
  display: flex;
  height: 52px;
  border-top: 2px solid #c8c8c8;
  background: linear-gradient(#e8e8e8, #efefef 8px);
  font-size: 24px;
}
.tab-nav {
  display: flex;
  gap: 30px;
  width: 122px;
  height: 42px;
  padding: 6px 0 0 29px;
  border-right: 2px solid #c8c8c8;
}
.sheet-tab {
  width: 157px;
  height: 45px;
  padding-top: 2px;
  font-weight: 500;
  color: #595959;
}
.sheet-tab.current {
  width: 240px;
  height: 47px;
  margin-top: -2px;
  padding-top: 4px;
  background: #fff;
  border: 2px solid #c0c0c0;
  border-top: none;
  border-radius: 0 0 6px 6px;
  font-weight: 600;
  color: #3c7f50;
}
.add {
  width: 77px;
  height: 42px;
  padding-top: 4px;
  border-right: 2px solid #c8c8c8;
}

/* status bar */
.status {
  display: flex;
  align-items: center;
  height: 46px;
  padding-right: 48px;
  border-top: 2px solid #a0a0a0;
  background: linear-gradient(#e4e4e4, #d8d8d8);
  color: #4c4c4c;
  font-size: 24px;
}
.ready {
  margin-left: 48px;
}
.access {
  display: flex;
  align-items: center;
  gap: 3px;
  margin-left: 39px;
  margin-right: auto;
}
.view {
  width: 72px;
  height: 44px;
}
.view.on {
  background: #a6a6a6;
}
.step {
  width: 16px;
  margin: 0 14px;
}
.view + .step {
  margin-left: 16px;
}
input[type=range] {
  appearance: none;
  width: 200px;
  height: 8px;
  border-radius: 4px;
  background: #9a9a9a;
}
input[type=range]::-webkit-slider-thumb {
  appearance: none;
  width: 32px;
  height: 32px;
  border-radius: 50%;
  background: #fff;
  box-shadow: 0 1px 3px rgba(0, 0, 0, 0.4);
}
.percent {
  margin-left: 20px;
}
```
